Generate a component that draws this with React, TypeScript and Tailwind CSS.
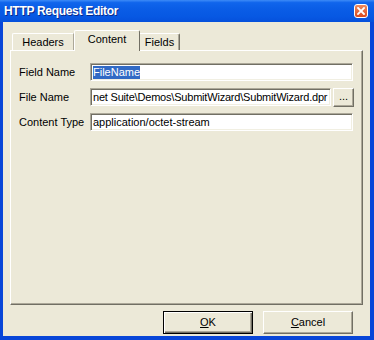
export default function App() {
  return (
    <div className="w-[374px] h-[340px] flex flex-col bg-[#0846d8] font-['Liberation_Sans',Arial,sans-serif] text-[11px] leading-[13px] text-black select-none">
      {/* title bar */}
      <div className="h-[22px] flex items-center justify-between pl-[4px] pr-[6px] bg-[linear-gradient(to_bottom,#3d8bf7_0%,#1065ec_12%,#0a5de6_40%,#0758e3_75%,#0550db_100%)]">
        <span className="text-white font-bold text-[12px] tracking-[-0.3px] [text-shadow:1px_1px_0_#0a2a8a]">HTTP Request Editor</span>
        <div className="w-[14px] h-[14px] rounded-[3px] border border-white bg-[linear-gradient(to_bottom,#ef8a5e,#d9491f)] flex items-center justify-center">
          <svg width="8" height="8" viewBox="0 0 8 8">
            <path d="M1 1 L7 7 M7 1 L1 7" stroke="#fff" strokeWidth="1.8" strokeLinecap="square" />
          </svg>
        </div>
      </div>

      {/* client area */}
      <div className="flex-1 flex flex-col ml-[3px] mr-[4px] mb-[4px] bg-[#ece9d8] px-[7px] pt-[8px]">
        {/* tabs */}
        <div className="h-[20px] flex items-end pl-[2px]">
          <div className="w-[62px] h-[17px] flex items-center justify-center border-t border-l border-white border-r border-r-[#aca899] rounded-tl-[2px]">
            Headers
          </div>
          <div className="relative z-10 -mb-[1px] w-[66px] h-[21px] pb-[4px] flex items-center justify-center bg-[#ece9d8] border-t border-l border-white border-r border-r-[#716f64] rounded-t-[2px]">
            Content
          </div>
          <div className="w-[40px] h-[17px] flex items-center justify-center border-t border-white border-r border-r-[#716f64] shadow-[inset_-1px_0_0_#aca899] rounded-tr-[2px]">
            Fields
          </div>
        </div>

        {/* panel */}
        <div className="h-[255px] flex flex-col gap-[7px] pl-[8px] pt-[12px] border border-t-white border-l-white border-r-[#716f64] border-b-[#716f64] shadow-[inset_-1px_-1px_0_#aca899]">
          <div className="flex items-center h-[18px]">
            <span className="w-[71px]">Field Name</span>
            <div className="w-[263px] h-[18px] flex items-center pl-[1px] bg-white border border-t-[#aca899] border-l-[#aca899] border-b-white border-r-white shadow-[inset_1px_1px_0_#716f64,inset_-1px_-1px_0_#f1efe2]">
              <span className="ml-[1px] bg-[#316ac5] text-white">FileName</span>
            </div>
          </div>
          <div className="flex items-center h-[18px]">
            <span className="w-[71px]">File Name</span>
            <div className="w-[241px] h-[18px] flex items-center pl-[2px] overflow-hidden whitespace-nowrap tracking-[-0.2px] bg-white border border-t-[#aca899] border-l-[#aca899] border-b-white border-r-white shadow-[inset_1px_1px_0_#716f64,inset_-1px_-1px_0_#f1efe2]">
              net Suite\Demos\SubmitWizard\SubmitWizard.dpr
            </div>
            <div className="ml-[2px] w-[21px] h-[19px] flex items-center justify-center pb-[2px] border border-t-white border-l-white border-r-[#716f64] border-b-[#716f64] shadow-[inset_-1px_-1px_0_#aca899]">
              ...
            </div>
          </div>
          <div className="flex items-center h-[18px]">
            <span className="w-[71px]">Content Type</span>
            <div className="w-[263px] h-[18px] flex items-center pl-[2px] bg-white border border-t-[#aca899] border-l-[#aca899] border-b-white border-r-white shadow-[inset_1px_1px_0_#716f64,inset_-1px_-1px_0_#f1efe2]">
              application/octet-stream
            </div>
          </div>
        </div>

        {/* buttons */}
        <div className="flex justify-end gap-[10px] pt-[6px] pr-[10px]">
          <div className="w-[90px] h-[23px] flex items-center justify-center border border-black shadow-[inset_1px_1px_0_#fff,inset_-1px_-1px_0_#716f64,inset_-2px_-2px_0_#aca899]">
            <span><span className="underline">O</span>K</span>
          </div>
          <div className="w-[90px] h-[23px] flex items-center justify-center border border-t-white border-l-white border-r-[#716f64] border-b-[#716f64] shadow-[inset_-1px_-1px_0_#aca899]">
            <span><span className="underline">C</span>ancel</span>
          </div>
        </div>
      </div>
    </div>
  );
}
